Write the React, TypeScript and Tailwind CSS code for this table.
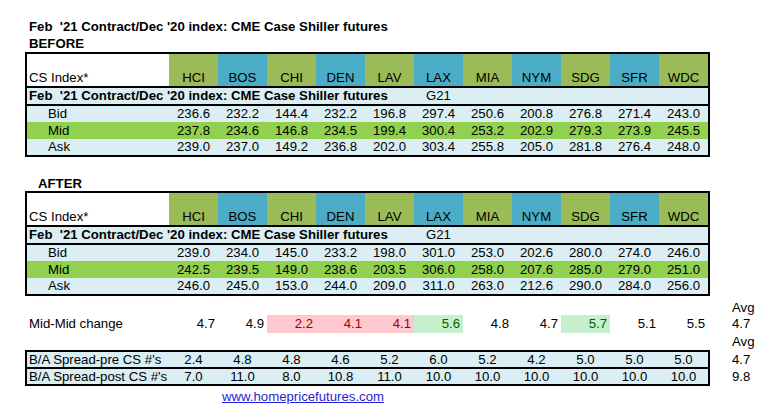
import React from "react";

const cities = ["HCI", "BOS", "CHI", "DEN", "LAV", "LAX", "MIA", "NYM", "SDG", "SFR", "WDC"];

const before = {
  bid: ["236.6", "232.2", "144.4", "232.2", "196.8", "297.4", "250.6", "200.8", "276.8", "271.4", "243.0"],
  mid: ["237.8", "234.6", "146.8", "234.5", "199.4", "300.4", "253.2", "202.9", "279.3", "273.9", "245.5"],
  ask: ["239.0", "237.0", "149.2", "236.8", "202.0", "303.4", "255.8", "205.0", "281.8", "276.4", "248.0"],
};

const after = {
  bid: ["239.0", "234.0", "145.0", "233.2", "198.0", "301.0", "253.0", "202.6", "280.0", "274.0", "246.0"],
  mid: ["242.5", "239.5", "149.0", "238.6", "203.5", "306.0", "258.0", "207.6", "285.0", "279.0", "251.0"],
  ask: ["246.0", "245.0", "153.0", "244.0", "209.0", "311.0", "263.0", "212.6", "290.0", "284.0", "256.0"],
};

// tone: 0 plain, 1 red, 2 green
const change: [string, number][] = [
  ["4.7", 0], ["4.9", 0], ["2.2", 1], ["4.1", 1], ["4.1", 1], ["5.6", 2],
  ["4.8", 0], ["4.7", 0], ["5.7", 2], ["5.1", 0], ["5.5", 0],
];

const spreadPre = ["2.4", "4.8", "4.8", "4.6", "5.2", "6.0", "5.2", "4.2", "5.0", "5.0", "5.0"];
const spreadPost = ["7.0", "11.0", "8.0", "10.8", "11.0", "10.0", "10.0", "10.0", "10.0", "10.0", "10.0"];

const TITLE = "Feb\u00a0\u00a0'21 Contract/Dec '20 index: CME Case Shiller futures";
const cols = "grid grid-cols-[142px_repeat(11,49px)]";

function DataRow({ label, values, green, h }: { label: string; values: string[]; green?: boolean; h: string }) {
  return (
    <div className={`${cols} ${h} ${green ? "bg-[#92d050]" : "bg-[#daeef3]"} items-center leading-none`}>
      <div className="pl-[21px]">{label}</div>
      {values.map((v, i) => (
        <div key={i} className="text-center">{v}</div>
      ))}
    </div>
  );
}

function PriceTable({ data }: { data: typeof before }) {
  return (
    <div className="w-[685px] border-2 border-black">
      {/* heights include the 2px bottom rule (border-box) */}
      <div className={`${cols} h-[34px] border-b-2 border-black leading-none`}>
        <div className="flex items-end pb-[2px] pl-[2px] bg-white">CS Index*</div>
        {cities.map((c, i) => (
          <div
            key={c}
            className={`flex items-end justify-center pb-[2px] ${i % 2 === 0 ? "bg-[#9bbb59]" : "bg-[#4bacc6]"}`}
          >
            {c}
          </div>
        ))}
      </div>
      <div className={`${cols} h-[18px] border-b-2 border-black bg-[#daeef3] items-center leading-none`}>
        <div className="col-span-6 pl-[2px] font-bold whitespace-nowrap">{TITLE}</div>
        <div className="text-center">G21</div>
      </div>
      <DataRow label="Bid" values={data.bid} h="h-[16px]" />
      <DataRow label="Mid" values={data.mid} h="h-[17px]" green />
      <DataRow label="Ask" values={data.ask} h="h-[16px]" />
    </div>
  );
}

export default function App() {
  return (
    <div className="w-[765px] h-[404px] bg-white pt-[18px] pl-[25px] text-[13.2px] text-black font-['Liberation_Sans',Arial,sans-serif] overflow-hidden">
      <div className="pl-[4px] font-bold leading-[17px] whitespace-nowrap">{TITLE}</div>
      <div className="pl-[4px] font-bold leading-[17px]">BEFORE</div>
      <PriceTable data={before} />

      <div className="mt-[19px] pl-[13px] font-bold leading-[15px]">AFTER</div>
      <PriceTable data={after} />

      <div className="flex">
        <div className="w-[685px]">
          <div className="h-[19px]" />
          <div className={`${cols} h-[18px] px-[2px] box-content items-stretch leading-none`}>
            <div className="flex items-center pl-[2px]">Mid-Mid change</div>
            {change.map(([v, t], i) => (
              <div
                key={i}
                className={`flex items-center justify-end pr-[3px] ${
                  t === 1 ? "bg-[#ffc7ce] text-[#9c0006]" : t === 2 ? "bg-[#c6efce] text-[#006100]" : ""
                }`}
              >
                {v}
              </div>
            ))}
          </div>
          <div className="h-[17px]" />
          <div className="border-2 border-black bg-[#daeef3]">
            <div className={`${cols} h-[17px] border-b-2 border-black items-center leading-none`}>
              <div className="pl-[2px] whitespace-nowrap">B/A Spread-pre CS #'s</div>
              {spreadPre.map((v, i) => (
                <div key={i} className="text-center">{v}</div>
              ))}
            </div>
            <div className={`${cols} h-[15px] items-center leading-none`}>
              <div className="pl-[2px] whitespace-nowrap">B/A Spread-post CS #'s</div>
              {spreadPost.map((v, i) => (
                <div key={i} className="text-center">{v}</div>
              ))}
            </div>
          </div>
        </div>
        <div className="pl-[22px] flex flex-col leading-none">
          <div className="h-[19px] flex items-end pb-[1px]">Avg</div>
          <div className="h-[18px] flex items-center">4.7</div>
          <div className="h-[17px] flex items-center">Avg</div>
          <div className="h-[15px] mt-[2px] flex items-center">4.7</div>
          <div className="h-[15px] mt-[2px] flex items-center">9.8</div>
        </div>
      </div>

      <div className="mt-[3px] pl-[197px] leading-[15px]">
        <span className="text-[#1f1fd6] underline">www.homepricefutures.com</span>
      </div>
    </div>
  );
}
